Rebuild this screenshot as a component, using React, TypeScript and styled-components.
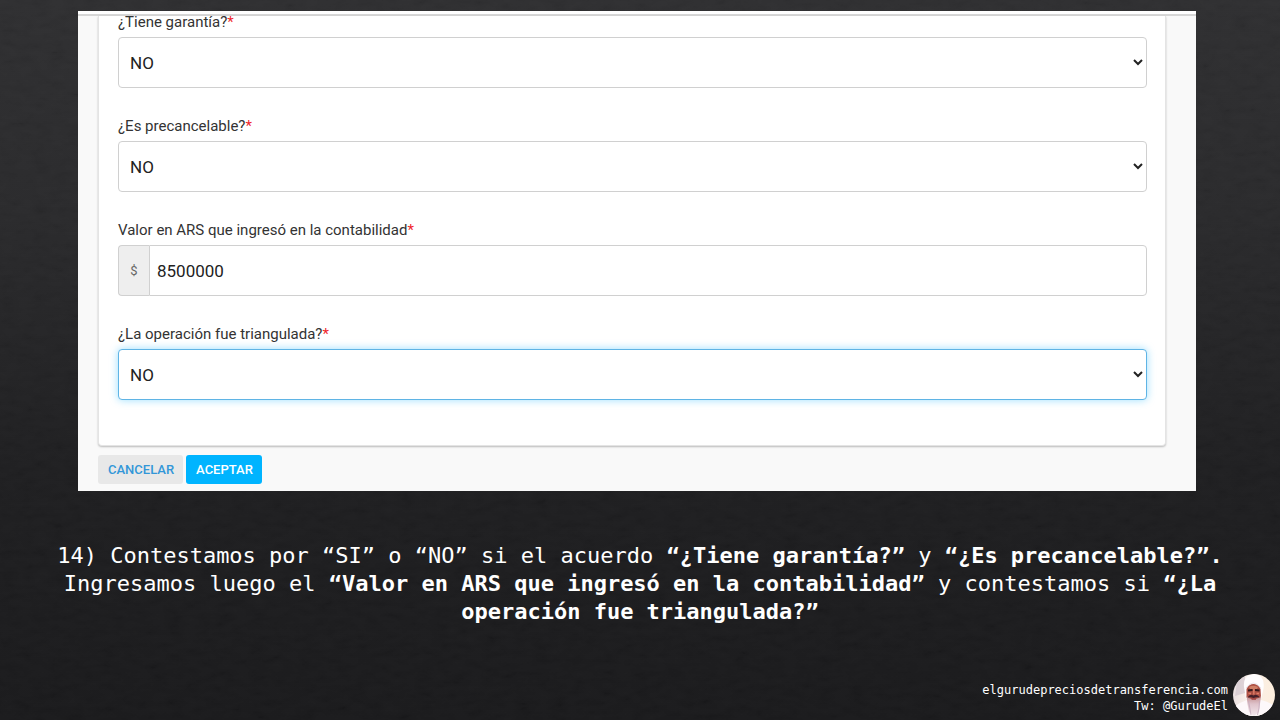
import React from "react";
import styled, { createGlobalStyle, css } from "styled-components";

const GlobalStyle = createGlobalStyle`
  *, *::before, *::after { box-sizing: border-box; }
  body { margin: 0; background: #1c1c1e; }
`;

const Slide = styled.main`
  position: relative;
  display: flex;
  flex-direction: column;
  min-height: 100vh;
  padding: 11px 0 4px;
  background: linear-gradient(#2e2e30 0%, #29292b 30%, #1e1e20 65%, #19191b 100%);
  font-family: "DejaVu Sans Mono", monospace;
  color: #fff;
`;

const Texture = styled.svg`
  position: absolute;
  inset: 0;
  width: 100%;
  height: 100%;
  opacity: 0.02;
  pointer-events: none;
`;

const Panel = styled.form`
  position: relative;
  margin: 0 84px 0 78px;
  padding-bottom: 7px;
  background: #f9f9f9;
  font-family: Roboto, sans-serif;
  color: #333;
`;

const TopBar = styled.div`
  height: 5px;
  background: #fff;
  border-bottom: 2px solid #d6d6d6;
`;

const Card = styled.section`
  display: flex;
  flex-direction: column;
  gap: 32px;
  margin: 0 30px 0 20px;
  padding: 0 18px 45px 19px;
  background: #fff;
  border: solid #e4e4e4;
  border-width: 0 1px 1px;
  border-radius: 0 0 4px 4px;
  box-shadow: 0 1px 2px rgba(0, 0, 0, 0.25);
`;

const Field = styled.div`
  display: flex;
  flex-direction: column;
  gap: 9px;
`;

const Label = styled.label`
  font-size: 15px;
  line-height: 12px;
`;

const Required = styled.span`
  color: #f0262b;
`;

const controlBox = css`
  height: 51px;
  border: 1px solid #d0d0d0;
  border-radius: 4px;
  background-color: #fff;
  font-family: inherit;
  font-size: 17px;
  color: #222;
  outline: none;
`;

const Select = styled.select<{ $active?: boolean }>`
  ${controlBox}
  width: 100%;
  padding: 0 4px 0 7px;
  ${(p) =>
    p.$active &&
    css`
      border-color: #5fb4e5;
      box-shadow: 0 0 8px rgba(0, 176, 255, 0.4);
    `}
`;

const InputGroup = styled.div`
  display: flex;
`;

const Prefix = styled.span`
  display: flex;
  align-items: center;
  justify-content: center;
  width: 31px;
  border: 1px solid #d0d0d0;
  border-right: 0;
  border-radius: 4px 0 0 4px;
  background: #eee;
  font-size: 13px;
  color: #666;
`;

const TextInput = styled.input`
  ${controlBox}
  flex: 1;
  min-width: 0;
  padding: 0 7px;
  border-radius: 0 4px 4px 0;
`;

const Actions = styled.div`
  display: flex;
  gap: 3px;
  margin: 9px 20px 0;
`;

const Button = styled.button<{ $primary?: boolean }>`
  height: 29px;
  padding: 0 9px 0 10px;
  border: 0;
  border-radius: 3px;
  font-family: inherit;
  font-size: 13px;
  font-weight: 500;
  background: ${(p) => (p.$primary ? "#00b4ff" : "#e8e8e8")};
  color: ${(p) => (p.$primary ? "#fff" : "#3397d8")};
`;

const Caption = styled.p`
  position: relative;
  margin: 51px 40px 24px;
  font-size: 22px;
  line-height: 28px;
  text-align: center;
`;

const Footer = styled.footer`
  position: relative;
  display: flex;
  align-items: center;
  justify-content: flex-end;
  gap: 5px;
  margin: auto 5px 0 0;
`;

const Credits = styled.address`
  padding-top: 6px;
  font-size: 12px;
  font-style: normal;
  line-height: 16px;
  text-align: right;
`;

const SiteLink = styled.a`
  color: inherit;
  text-decoration: none;
`;

const Avatar = styled.svg`
  display: block;
  width: 42px;
  height: 42px;
`;

type SelectFieldProps = { id: string; label: string; active?: boolean };

function SelectField({ id, label, active }: SelectFieldProps) {
  return (
    <Field>
      <Label htmlFor={id}>
        {label}
        <Required>*</Required>
      </Label>
      <Select id={id} defaultValue="NO" $active={active}>
        <option>NO</option>
        <option>SI</option>
      </Select>
    </Field>
  );
}

export default function App() {
  return (
    <>
      <GlobalStyle />
      <Slide>
        <Texture aria-hidden="true">
          <filter id="grain">
            <feTurbulence type="fractalNoise" baseFrequency="0.06 0.14" numOctaves="4" seed="4" />
            <feColorMatrix type="matrix" values="1.4 0 0 0 -0.2  1.4 0 0 0 -0.2  1.4 0 0 0 -0.2  0 0 0 0 1" />
          </filter>
          <rect width="100%" height="100%" filter="url(#grain)" />
        </Texture>
        <Panel onSubmit={(e) => e.preventDefault()}>
          <TopBar />
          <Card>
            <SelectField id="garantia" label="¿Tiene garantía?" />
            <SelectField id="precancelable" label="¿Es precancelable?" />
            <Field>
              <Label htmlFor="valor">
                Valor en ARS que ingresó en la contabilidad<Required>*</Required>
              </Label>
              <InputGroup>
                <Prefix>$</Prefix>
                <TextInput id="valor" type="text" defaultValue="8500000" />
              </InputGroup>
            </Field>
            <SelectField id="triangulada" label="¿La operación fue triangulada?" active />
          </Card>
          <Actions>
            <Button type="button">CANCELAR</Button>
            <Button type="submit" $primary>
              ACEPTAR
            </Button>
          </Actions>
        </Panel>
        <Caption>
          14) Contestamos por “SI” o “NO” si el acuerdo <b>“¿Tiene garantía?”</b> y{" "}
          <b>“¿Es precancelable?”.</b> Ingresamos luego el{" "}
          <b>“Valor en ARS que ingresó en la contabilidad”</b> y contestamos si{" "}
          <b>“¿La</b> <b>operación fue triangulada?”</b>
        </Caption>
        <Footer>
          <Credits>
            <SiteLink href="#sitio">elgurudepreciosdetransferencia.com</SiteLink>
            <br />
            Tw: @GurudeEl
          </Credits>
          <Avatar viewBox="0 0 42 42" role="img" aria-label="Gurú">
            <defs>
              <clipPath id="disc">
                <circle cx="21" cy="21" r="21" />
              </clipPath>
              <linearGradient id="wall" x1="0" x2="1">
                <stop offset="0" stopColor="#eadfe0" />
                <stop offset="0.3" stopColor="#f8efe9" />
                <stop offset="1" stopColor="#fdeedd" />
              </linearGradient>
              <linearGradient id="beard" x1="0" x2="0" y1="0" y2="1">
                <stop offset="0" stopColor="#c08c8c" />
                <stop offset="0.4" stopColor="#dfc3cb" />
                <stop offset="1" stopColor="#f3e8ee" />
              </linearGradient>
            </defs>
            <g clipPath="url(#disc)">
              <rect width="42" height="42" fill="url(#wall)" />
              <path d="M4 8 L12 2 L12 19 L2 22Z" fill="#cbbdc8" opacity="0.55" />
              <path d="M0 42 L2 32 Q8 28 14 26 L28 26 Q36 28 42 32 V42Z" fill="#fdf8fa" />
              <path d="M11 13 Q10 3 17 1 Q24 -2 29 4 Q32 9 30 17 L28 25 L13 25Z" fill="#fffdfe" />
              <path d="M13.500 15 Q16 10 20.500 10 Q25 10 27.500 15 L28 23 Q25 29 20.500 29 Q15 28 13.500 23Z" fill="#ad5044" />
              <path d="M16 13 Q20 10.500 25 13 L24 15 L17 15Z" fill="#cf7f66" />
              <path d="M15 16.500 L19.500 16 M22 16 L26.500 16.500" stroke="#35191c" strokeWidth="1.800" />
              <path d="M15.500 19.500 H18 M23.500 19.500 H26" stroke="#e07c67" strokeWidth="1.500" />
              <path d="M20.800 15 V20.500" stroke="#d77b66" strokeWidth="1.500" />
              <path d="M13.500 22 Q17 26 20.500 25 Q24 26 28 22 L27 30 L26 38 L21 42 L16 38 L14.500 30Z" fill="url(#beard)" />
              <path d="M14.500 23.500 Q17 19.500 20.500 21.500 Q24 19.500 27 23.500 Q23 23 20.500 24 Q18 23 14.500 23.500Z" fill="#44202a" />
              <path d="M18.500 25 H23" stroke="#a04545" strokeWidth="1.400" />
              <path d="M15.500 27 L17 35 L18 41 M26.500 27 L26 34 L24.500 41" stroke="#c5a9bc" fill="none" strokeWidth="0.800" />
              <path d="M13 14 Q20 4 28 14" stroke="#e6dce4" fill="none" strokeWidth="0.800" />
            </g>
          </Avatar>
        </Footer>
      </Slide>
    </>
  );
}
